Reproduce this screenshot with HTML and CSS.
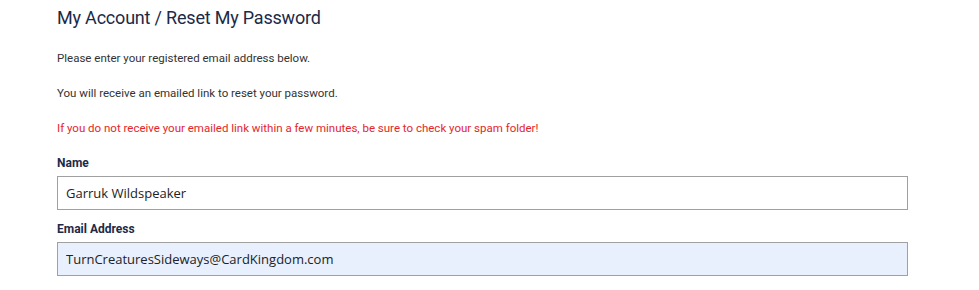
FILE: index.html
```html
<!DOCTYPE html>
<html>
<head>
<meta charset="utf-8">
<link rel="stylesheet" href="styles.css">
</head>
<body>
<main class="page">
  <h1 class="title">My Account / Reset My Password</h1>
  <p class="text">Please enter your registered email address below.</p>
  <p class="text">You will receive an emailed link to reset your password.</p>
  <p class="text warn">If you do not receive your emailed link within a few minutes, be sure to check your spam folder!</p>
  <form class="form">
    <label class="label" for="name">Name</label>
    <input class="input" id="name" type="text" value="Garruk Wildspeaker">
    <label class="label" for="email">Email Address</label>
    <input class="input filled" id="email" type="email" value="TurnCreaturesSideways@CardKingdom.com">
  </form>
</main>
</body>
</html>
```

FILE: styles.css
```css
html, body {
  margin: 0;
  padding: 0;
  background: #fff;
}
.page {
  padding: 6px 71px 0 57px;
  font-family: Roboto, "Liberation Sans", sans-serif;
  color: #333;
}
.title {
  margin: 0;
  font-size: 18px;
  letter-spacing: -0.2px;
  font-weight: 400;
  color: #1c2a48;
  line-height: 24px;
}
.text {
  margin: 21px 0 0;
  font-size: 11.5px;
  line-height: 14px;
  color: #333;
}
.warn {
  color: #e3262d;
}
.form {
  display: flex;
  flex-direction: column;
  margin-top: 21px;
}
.label {
  font-size: 12px;
  font-weight: 700;
  color: #1c2a48;
  line-height: 14px;
  margin-bottom: 6px;
}
.input {
  box-sizing: border-box;
  height: 34px;
  border: 1px solid #a0a0a0;
  padding: 0 8px;
  font-family: "Open Sans", sans-serif;
  font-size: 13px;
  color: #222;
  background: #fff;
  margin-bottom: 12px;
}
.filled {
  background: #e8f0fe;
}
```
